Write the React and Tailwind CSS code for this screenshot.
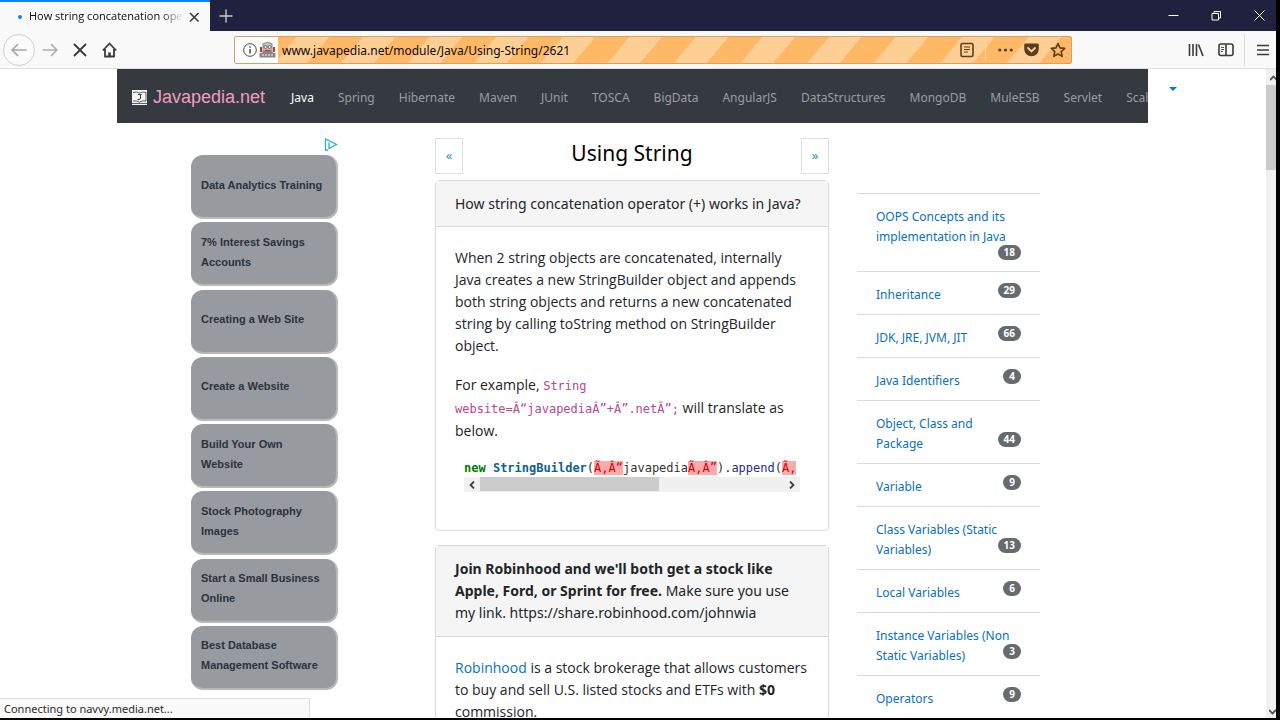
import React, { useState } from "react";

const navItems = [
    'Java', 'Spring', 'Hibernate', 'Maven', 'JUnit', 'TOSCA', 'BigData', 'AngularJS',
    'DataStructures', 'MongoDB', 'MuleESB', 'Servlet', 'Scala'
];

const adLinks = [
    'Data Analytics Training',
    '7% Interest Savings Accounts',
    'Creating a Web Site',
    'Create a Website',
    'Build Your Own Website',
    'Stock Photography Images',
    'Start a Small Business Online',
    'Best Database Management Software'
];

const topics = [
    { name: 'OOPS Concepts and its implementation in Java', count: 18 },
    { name: 'Inheritance', count: 29 },
    { name: 'JDK, JRE, JVM, JIT', count: 66 },
    { name: 'Java Identifiers', count: 4 },
    { name: 'Object, Class and Package', count: 44 },
    { name: 'Variable', count: 9 },
    { name: 'Class Variables (Static Variables)', count: 13 },
    { name: 'Local Variables', count: 6 },
    { name: 'Instance Variables (Non Static Variables)', count: 3 },
    { name: 'Operators', count: 9 },
];

const TabStrip = () => (
    <div className="flex h-[31px] shrink-0 bg-[#20213f]">
        <div className="flex w-[210px] items-center border-t-2 border-[#0a84ff] bg-[#f9f9fa] pl-[18px] pr-[6px]">
            <span className="size-1 shrink-0 rounded-full bg-[#0a84ff]"></span>
            <span className="ml-[7px] flex-1 overflow-hidden whitespace-nowrap font-['Open_Sans'] text-[11px] text-[#0c0c0d] mask-r-from-85% mask-r-to-100%">
                How string concatenation operator
            </span>
            <button aria-label="Close tab" className="flex size-5 items-center justify-center">
                <svg width="12" height="12" viewBox="0 0 12 12" stroke="#3b3b3e" strokeWidth="1.6" fill="none">
                    <path d="M2 2l8.5 8.5M10.5 2L2 10.5" />
                </svg>
            </button>
        </div>
        <button aria-label="New tab" className="flex w-8 items-center justify-center">
            <svg width="14" height="14" viewBox="0 0 14 14" stroke="#c9c9d6" strokeWidth="1.4">
                <path d="M7 0.5v13M0.5 7h13" />
            </svg>
        </button>
        <div className="ml-auto flex">
            <button aria-label="Minimize" className="flex w-[34px] items-center justify-center">
                <svg width="11" height="11" viewBox="0 0 11 11" stroke="#fff"><path d="M0.5 5.5h10" /></svg>
            </button>
            <button aria-label="Restore" className="flex w-[52px] items-center justify-center">
                <svg width="11" height="11" viewBox="0 0 11 11" stroke="#fff" fill="none">
                    <path d="M1 3.5h6.5v6.5H1zM3 3.5v-2h6.5V8H7.5" />
                </svg>
            </button>
            <button aria-label="Close window" className="flex w-[34px] items-center justify-center">
                <svg width="11" height="11" viewBox="0 0 11 11" stroke="#fff"><path d="M0.5 0.5l10 10M10.5 0.5l-10 10" /></svg>
            </button>
        </div>
    </div>
);

const AddressBar = () => {
    const [url, setUrl] = useState('www.javapedia.net/module/Java/Using-String/2621');
    return (
        <div className="mr-[116px] flex h-[28px] min-w-0 flex-1 items-center rounded-xs border border-[#d9a066] bg-[repeating-linear-gradient(130deg,#fecf94_0px,#fecf94_21px,#ffb866_21px,#ffb866_47px,#fecf94_47px,#fecf94_51px)] text-[#5a3f1c]">
            <div className="flex h-full w-[43px] shrink-0 items-center gap-[2px] bg-white pl-2">
                <svg width="14" height="14" viewBox="0 0 14 14" fill="none" stroke="#4a4a4f" aria-hidden="true">
                    <circle cx="7" cy="7" r="6.3" />
                    <path d="M7 6v4.5M7 3.3v1.5" strokeWidth="1.5" />
                </svg>
                <svg width="17" height="16" viewBox="0 0 17 16" aria-hidden="true">
                    <path d="M4 1.5Q8.5-0.5 13 1.5V10H4z" fill="#c9c6c8" stroke="#8d8685" />
                    <path d="M1 5h2v5H1zM14 5h2v5h-2z" fill="#b5392f" />
                    <path d="M0.5 11h2l2-2h8l2 2h2v4.5h-16z" fill="#8c8485" />
                    <circle cx="6.5" cy="5" r="1.5" fill="#fff" stroke="#7a5b50" />
                    <circle cx="10.5" cy="5" r="1.5" fill="#fff" stroke="#7a5b50" />
                    <path d="M5.5 8.5h6" stroke="#c4462f" strokeWidth="1.4" />
                    <path d="M3 13h11" stroke="#d6d2d2" strokeWidth="1.4" strokeDasharray="2 1" />
                </svg>
            </div>
            <input
                aria-label="Address"
                value={url}
                onChange={(e) => setUrl(e.target.value)}
                className="min-w-0 flex-1 bg-transparent pl-1 pt-[2px] text-[12px] text-[#0c0c0d] outline-none"
            />
            <button aria-label="Reader view" className="mr-[11px]">
                <svg width="14" height="16" viewBox="0 0 14 16" fill="none" stroke="currentColor" strokeWidth="1.6">
                    <rect x="1" y="1.5" width="12" height="13" rx="1.5" />
                    <path d="M4 5h6M4 7.5h6M4 10h4" strokeWidth="1" />
                </svg>
            </button>
            <span className="mr-3 h-5 w-px bg-[#ffe0b8]"></span>
            <button aria-label="Page actions" className="mr-[11px]">
                <svg width="15" height="16" viewBox="0 0 15 16" fill="currentColor">
                    <circle cx="1.8" cy="8" r="1.6" /><circle cx="7.5" cy="8" r="1.6" /><circle cx="13.2" cy="8" r="1.6" />
                </svg>
            </button>
            <button aria-label="Save to Pocket" className="mr-[11px]">
                <svg width="15" height="14" viewBox="0 0 15 14">
                    <path d="M1.5 0.5h12a1.3 1.3 0 0 1 1.3 1.3V6a7.3 7.3 0 0 1-14.6 0V1.8A1.3 1.3 0 0 1 1.5 0.5z" fill="currentColor" />
                    <path d="M4 5l3.5 3.4L11 5" stroke="#ffd198" strokeWidth="1.8" fill="none" strokeLinecap="round" />
                </svg>
            </button>
            <button aria-label="Bookmark" className="mr-[5px]">
                <svg width="16" height="16" viewBox="0 0 16 16" fill="none" stroke="currentColor" strokeWidth="1.6" strokeLinejoin="round">
                    <path d="M8 1.5l2 4.4 4.7 0.5-3.5 3.2 1 4.8L8 12l-4.2 2.4 1-4.8L1.3 6.4 6 5.9z" />
                </svg>
            </button>
        </div>
    );
};

const Toolbar = () => (
    <div className="flex h-[38px] shrink-0 items-center border-b border-[#e0e0e2] bg-[#f9f9fa] pl-[3px] text-[#3b3b3e]">
        <button aria-label="Back" className="flex size-8 items-center justify-center rounded-full border border-[#d0d0d2] bg-[#fbfbfb] text-[#a5a5a8]">
            <svg width="16" height="14" viewBox="0 0 16 14" fill="none" stroke="currentColor" strokeWidth="1.7">
                <path d="M15.5 7H1.5M7 1L1.2 7 7 13" />
            </svg>
        </button>
        <button aria-label="Forward" className="ml-[7px] text-[#b0b0b3]">
            <svg width="16" height="14" viewBox="0 0 16 14" fill="none" stroke="currentColor" strokeWidth="1.7">
                <path d="M0.5 7h14M9 1l5.8 6L9 13" />
            </svg>
        </button>
        <button aria-label="Stop" className="ml-[15px]">
            <svg width="14" height="14" viewBox="0 0 14 14" stroke="currentColor" strokeWidth="1.8"><path d="M1 1l12 12M13 1L1 13" /></svg>
        </button>
        <button aria-label="Home" className="ml-[15px] mr-[117px]">
            <svg width="15" height="16" viewBox="0 0 15 16" fill="none" stroke="currentColor" strokeWidth="1.8">
                <path d="M0.8 8.5L7.5 1.5l6.7 7M3 7v7.5h9V7" strokeLinejoin="round" />
                <path d="M7.5 15v-4.5" strokeWidth="2.6" />
            </svg>
        </button>
        <AddressBar />
        <button aria-label="Library" className="mr-[14px]">
            <svg width="16" height="14" viewBox="0 0 16 14" stroke="currentColor" strokeWidth="1.6">
                <path d="M1.5 1v12M5 1v12M8.5 1v12M10.5 1.5L15 13" />
            </svg>
        </button>
        <button aria-label="Sidebars" className="mr-[10px]">
            <svg width="16" height="14" viewBox="0 0 16 14" fill="none" stroke="currentColor" strokeWidth="1.6">
                <rect x="1" y="1" width="14" height="11.5" rx="2" />
                <path d="M8 1v11.5" />
                <path d="M3 4.5h3M3 6.5h3M3 8.5h2" strokeWidth="0.9" />
            </svg>
        </button>
        <span className="h-8 w-px bg-[#dcdcde]"></span>
        <button aria-label="Menu" className="ml-3 mr-[7px]">
            <svg width="12" height="12" viewBox="0 0 12 12" stroke="currentColor" strokeWidth="1.7"><path d="M0 1.5h12M0 6h12M0 10.5h12" /></svg>
        </button>
    </div>
);

const SiteNav = () => (
    <nav className="relative h-[54px] bg-[#343a40]">
        <div className="flex h-full items-center overflow-hidden whitespace-nowrap pl-[15px] pt-[3px]">
            <a href="#home" className="mr-[14px] flex items-center gap-[6px] font-['Liberation_Sans'] text-[18px] text-[#f29cbd]">
                <svg width="15" height="15" viewBox="0 0 15 15" aria-hidden="true">
                    <path d="M0 0h15v15H0z" fill="#f4f4f4" />
                    <path d="M1 2.5q3.5-1 6.5 0.5Q10.5 1.5 14 2.5v8.5q-3.5-0.5-6.5 1Q4.5 10.5 1 11M0 13.5h15" stroke="#343a40" strokeWidth="0.8" fill="none" />
                    <path d="M6 4.5h3.5M8.5 4.5V8q0 2-3 1.5" stroke="#343a40" fill="none" />
                </svg>
                Javapedia.net
            </a>
            {navItems.map((el, i) => (
                <a key={el} href={`#${el}`} className={`px-3 text-[12px] ${i === 0 ? 'text-white' : 'text-[#9a9da0]'}`}>
                    {el}
                </a>
            ))}
        </div>
        <button aria-label="More topics" className="absolute -right-[29px] top-[18px] border-x-4 border-t-4 border-x-transparent border-t-[#0a78d0]"></button>
    </nav>
);

const Ads = () => (
    <aside className="w-[147px] shrink-0 pt-[15px]">
        <svg className="ml-auto block" width="14" height="13" viewBox="0 0 14 13" fill="none" stroke="#27b0d0" strokeWidth="1.3" aria-label="AdChoices">
            <path d="M4 12H1.5V1L12.5 6.5 5 10.5V4.5" />
        </svg>
        <ul className="mt-1 flex h-[535px] flex-col justify-between">
            {adLinks.map(el => (
                <li key={el}>
                    <a href="#ad" className="flex h-16 items-center rounded-xl border-b-2 border-r-2 border-[#b6b8ba] bg-[#979a9f] px-[10px] pb-[3px] font-['Liberation_Sans'] text-[11px] font-bold leading-5 text-[#2b333d]">
                        {el}
                    </a>
                </li>
            ))}
        </ul>
    </aside>
);

const Bad = ({ children }) => <span className="bg-[#ffaaaa] text-[#d00000]">{children}</span>;

const CodeSample = () => (
    <div className="mx-[9px]">
        <pre className="overflow-hidden font-['DejaVu_Sans_Mono',monospace] text-[12px] leading-[18px] text-[#333]">
            <b className="text-[#008000]">new</b> <b className="text-[#0e5f94]">StringBuilder</b>(<Bad>Ã‚Â“</Bad>javapedia<Bad>Ã‚Â”</Bad>).<span className="text-[#2b2b80]">append</span>(<Bad>Ã‚</Bad>
        </pre>
        <div className="flex h-[15px] items-center bg-[#f0f0f0] text-[#404040]">
            <button aria-label="Scroll left" className="flex w-4 justify-center">
                <svg width="6" height="8" viewBox="0 0 6 8" fill="none" stroke="currentColor" strokeWidth="1.8"><path d="M5 0.5L1.5 4 5 7.5" /></svg>
            </button>
            <div className="h-full flex-1"><div className="h-[14px] w-[59%] bg-[#cbcbcb]"></div></div>
            <button aria-label="Scroll right" className="flex w-4 justify-center">
                <svg width="6" height="8" viewBox="0 0 6 8" fill="none" stroke="currentColor" strokeWidth="1.8"><path d="M1 0.5L4.5 4 1 7.5" /></svg>
            </button>
        </div>
    </div>
);

const Article = () => (
    <main className="min-w-0 flex-1 pt-[15px]">
        <div className="flex h-9 justify-between">
            <a href="#prev" aria-label="Previous" className="flex w-7 items-center justify-center border border-[#dee2e6] text-[13px] text-[#2b8fc4]">«</a>
            <h1 className="text-[21px] leading-[30px] text-black">Using String</h1>
            <a href="#next" aria-label="Next" className="flex w-7 items-center justify-center border border-[#dee2e6] text-[13px] text-[#2b8fc4]">»</a>
        </div>
        <section className="mt-[6px] rounded border border-[#d9d9d9]">
            <h2 className="border-b border-[#d9d9d9] bg-[#f5f5f5] px-[19px] pb-[11px] pt-3 leading-[22px]">
                How string concatenation operator (+) works in Java?
            </h2>
            <div className="px-[19px] pb-[38px] pt-5 font-['Open_Sans']">
                <p className="leading-[22px]">
                    When 2 string objects are concatenated, internally Java creates a new StringBuilder object and appends both string objects and returns a new concatenated string by calling toString method on StringBuilder object.
                </p>
                <p className="mt-4 leading-[23px]">
                    For example, <code className="font-['DejaVu_Sans_Mono',monospace] text-[12px] leading-4 text-[#b8478f]">String website=Â“javapediaÂ”+Â”.netÂ”;</code> will translate as below.
                </p>
                <div className="mt-[17px]"><CodeSample /></div>
            </div>
        </section>
        <section className="mt-[14px] rounded border border-[#d9d9d9]">
            <h2 className="border-b border-[#d9d9d9] bg-[#f5f5f5] px-[19px] py-3 leading-[22px]">
                <b>Join Robinhood and we'll both get a stock like Apple, Ford, or Sprint for free.</b> Make sure you use my link. https://share.robinhood.com/johnwia
            </h2>
            <p className="pl-[19px] pr-3 pt-5 font-['Open_Sans'] leading-[22px]">
                <a href="#robinhood" className="text-[#0a6fc2]">Robinhood</a> is a stock brokerage that allows customers to buy and sell U.S. listed stocks and ETFs with <b>$0</b> commission.
            </p>
        </section>
    </main>
);

const Topics = () => (
    <ul className="w-[183px] shrink-0 pt-[70px]">
        {topics.map(el => (
            <li key={el.name} className="border-t border-[#d9d9d9] px-[19px] pb-[9px] pt-[13px]">
                <a href="#topic" className="flow-root text-[12px] leading-5 text-[#0a6fc2]">
                    {el.name}
                    <span className="float-right -mt-[2px] mb-[2px] rounded-full bg-[#666b70] px-[6px] text-[10px] font-bold leading-[15px] text-white">{el.count}</span>
                </a>
            </li>
        ))}
    </ul>
);

const PageScrollbar = () => (
    <div className="flex w-[10px] shrink-0 flex-col items-end justify-between overflow-hidden bg-[#f0f0f0]">
        <div className="w-full">
            <svg className="ml-1" width="8" height="16" viewBox="0 0 8 16" fill="none" stroke="#505050" strokeWidth="1.8"><path d="M0 11l3.5-3.5L7 11" /></svg>
            <div className="h-[85px] w-full bg-[#cbcbcb]"></div>
        </div>
        <svg width="7" height="14" viewBox="0 0 7 14" fill="none" stroke="#505050" strokeWidth="1.8"><path d="M0 6l3.5 3.5L7 6" /></svg>
    </div>
);

const App = () => (
    <div className="relative flex h-screen flex-col overflow-hidden border-b-2 border-r-4 border-black bg-white font-['Noto_Sans','Open_Sans',sans-serif] text-[14px] text-[#212529]">
        <TabStrip />
        <Toolbar />
        <div className="flex min-h-0 flex-1">
            <div className="min-w-0 flex-1 overflow-hidden pr-px">
                <div className="mx-auto max-w-[1031px]">
                    <SiteNav />
                    <div className="flex pl-[74px] pr-[108px]">
                        <Ads />
                        <div className="w-[97px] shrink-0"></div>
                        <Article />
                        <div className="w-7 shrink-0"></div>
                        <Topics />
                    </div>
                </div>
            </div>
            <PageScrollbar />
        </div>
        <div className="absolute bottom-0 left-0 w-[310px] border-r border-t border-[#e0e0e2] bg-[#f9f9fa] pl-1 text-[11px] leading-[19px] text-[#2b2b2b]">
            Connecting to navvy.media.net...
        </div>
    </div>
);

export default App;
